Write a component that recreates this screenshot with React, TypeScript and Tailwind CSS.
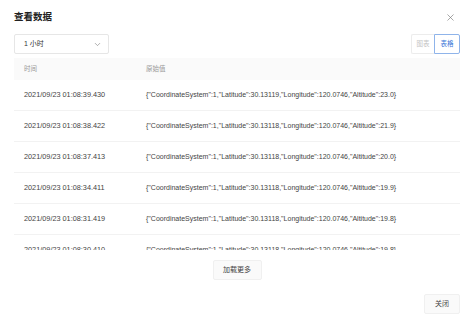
import React from 'react';
import { ChevronDown, X } from 'lucide-react';

const rows = [
  { time: '2021/09/23 01:08:39.430', lat: '30.13119', alt: '23.0' },
  { time: '2021/09/23 01:08:38.422', lat: '30.13118', alt: '21.9' },
  { time: '2021/09/23 01:08:37.413', lat: '30.13118', alt: '20.0' },
  { time: '2021/09/23 01:08:34.411', lat: '30.13118', alt: '19.9' },
  { time: '2021/09/23 01:08:31.419', lat: '30.13118', alt: '19.8' },
  { time: '2021/09/23 01:08:30.410', lat: '30.13118', alt: '19.8' },
];

export default function App() {
  return (
    <div
      className="w-[474px] h-[323px] bg-white flex flex-col text-[#333]"
      style={{ fontFamily: '"Liberation Sans", "Noto Sans CJK SC", sans-serif' }}
    >
      {/* Header */}
      <div className="h-[34px] flex items-center justify-between pl-[14px] pr-[18px]">
        <h1 className="text-[9.5px] font-bold text-[#222]">查看数据</h1>
        <X className="w-[11px] h-[11px] text-[#777]" strokeWidth={1.4} />
      </div>

      {/* Toolbar */}
      <div className="h-[20px] flex items-center justify-between px-[14px]">
        <div className="w-[95px] h-[20px] border border-[#e6e6e6] rounded-[2px] flex items-center justify-between pl-[9px] pr-[6px]">
          <span className="text-[7px] text-[#333]">1 小时</span>
          <ChevronDown className="w-[9px] h-[9px] text-[#888]" strokeWidth={1.8} />
        </div>
        <div className="flex h-[20px]">
          <button className="w-[23px] h-[20px] border border-[#ececec] border-r-0 text-[6.5px] text-[#c4c4c4] rounded-l-[2px]">
            图表
          </button>
          <button className="w-[26px] h-[20px] border border-[#8fb4ea] text-[6.5px] text-[#3a78d8] rounded-r-[2px]">
            表格
          </button>
        </div>
      </div>

      {/* Table */}
      <div className="mx-[14px] mt-[4px]">
        <div className="h-[22px] bg-[#fafafa] flex items-center text-[6.5px] text-[#999]">
          <div className="w-[132px] pl-[10px]">时间</div>
          <div>原始值</div>
        </div>
        <div className="h-[170px] overflow-hidden">
          {rows.map((r) => (
            <div
              key={r.time}
              className="h-[31px] shrink-0 flex items-center border-b border-[#f2f2f2] text-[#444]"
            >
              <div className="w-[132px] pl-[10px] text-[7.3px]">{r.time}</div>
              <div className="text-[7px]">
                {`{"CoordinateSystem":1,"Latitude":${r.lat},"Longitude":120.0746,"Altitude":${r.alt}}`}
              </div>
            </div>
          ))}
        </div>
      </div>

      {/* Load more */}
      <div className="flex justify-center mt-[10px]">
        <button className="w-[49px] h-[20px] bg-[#fafafa] border border-[#f0f0f0] rounded-[2px] text-[7px] text-[#444]">
          加载更多
        </button>
      </div>

      {/* Footer */}
      <div className="flex justify-end px-[14px] mt-[14px]">
        <button className="w-[36px] h-[20px] bg-[#fafafa] border border-[#f0f0f0] rounded-[2px] text-[7px] text-[#444]">
          关闭
        </button>
      </div>
    </div>
  );
}
